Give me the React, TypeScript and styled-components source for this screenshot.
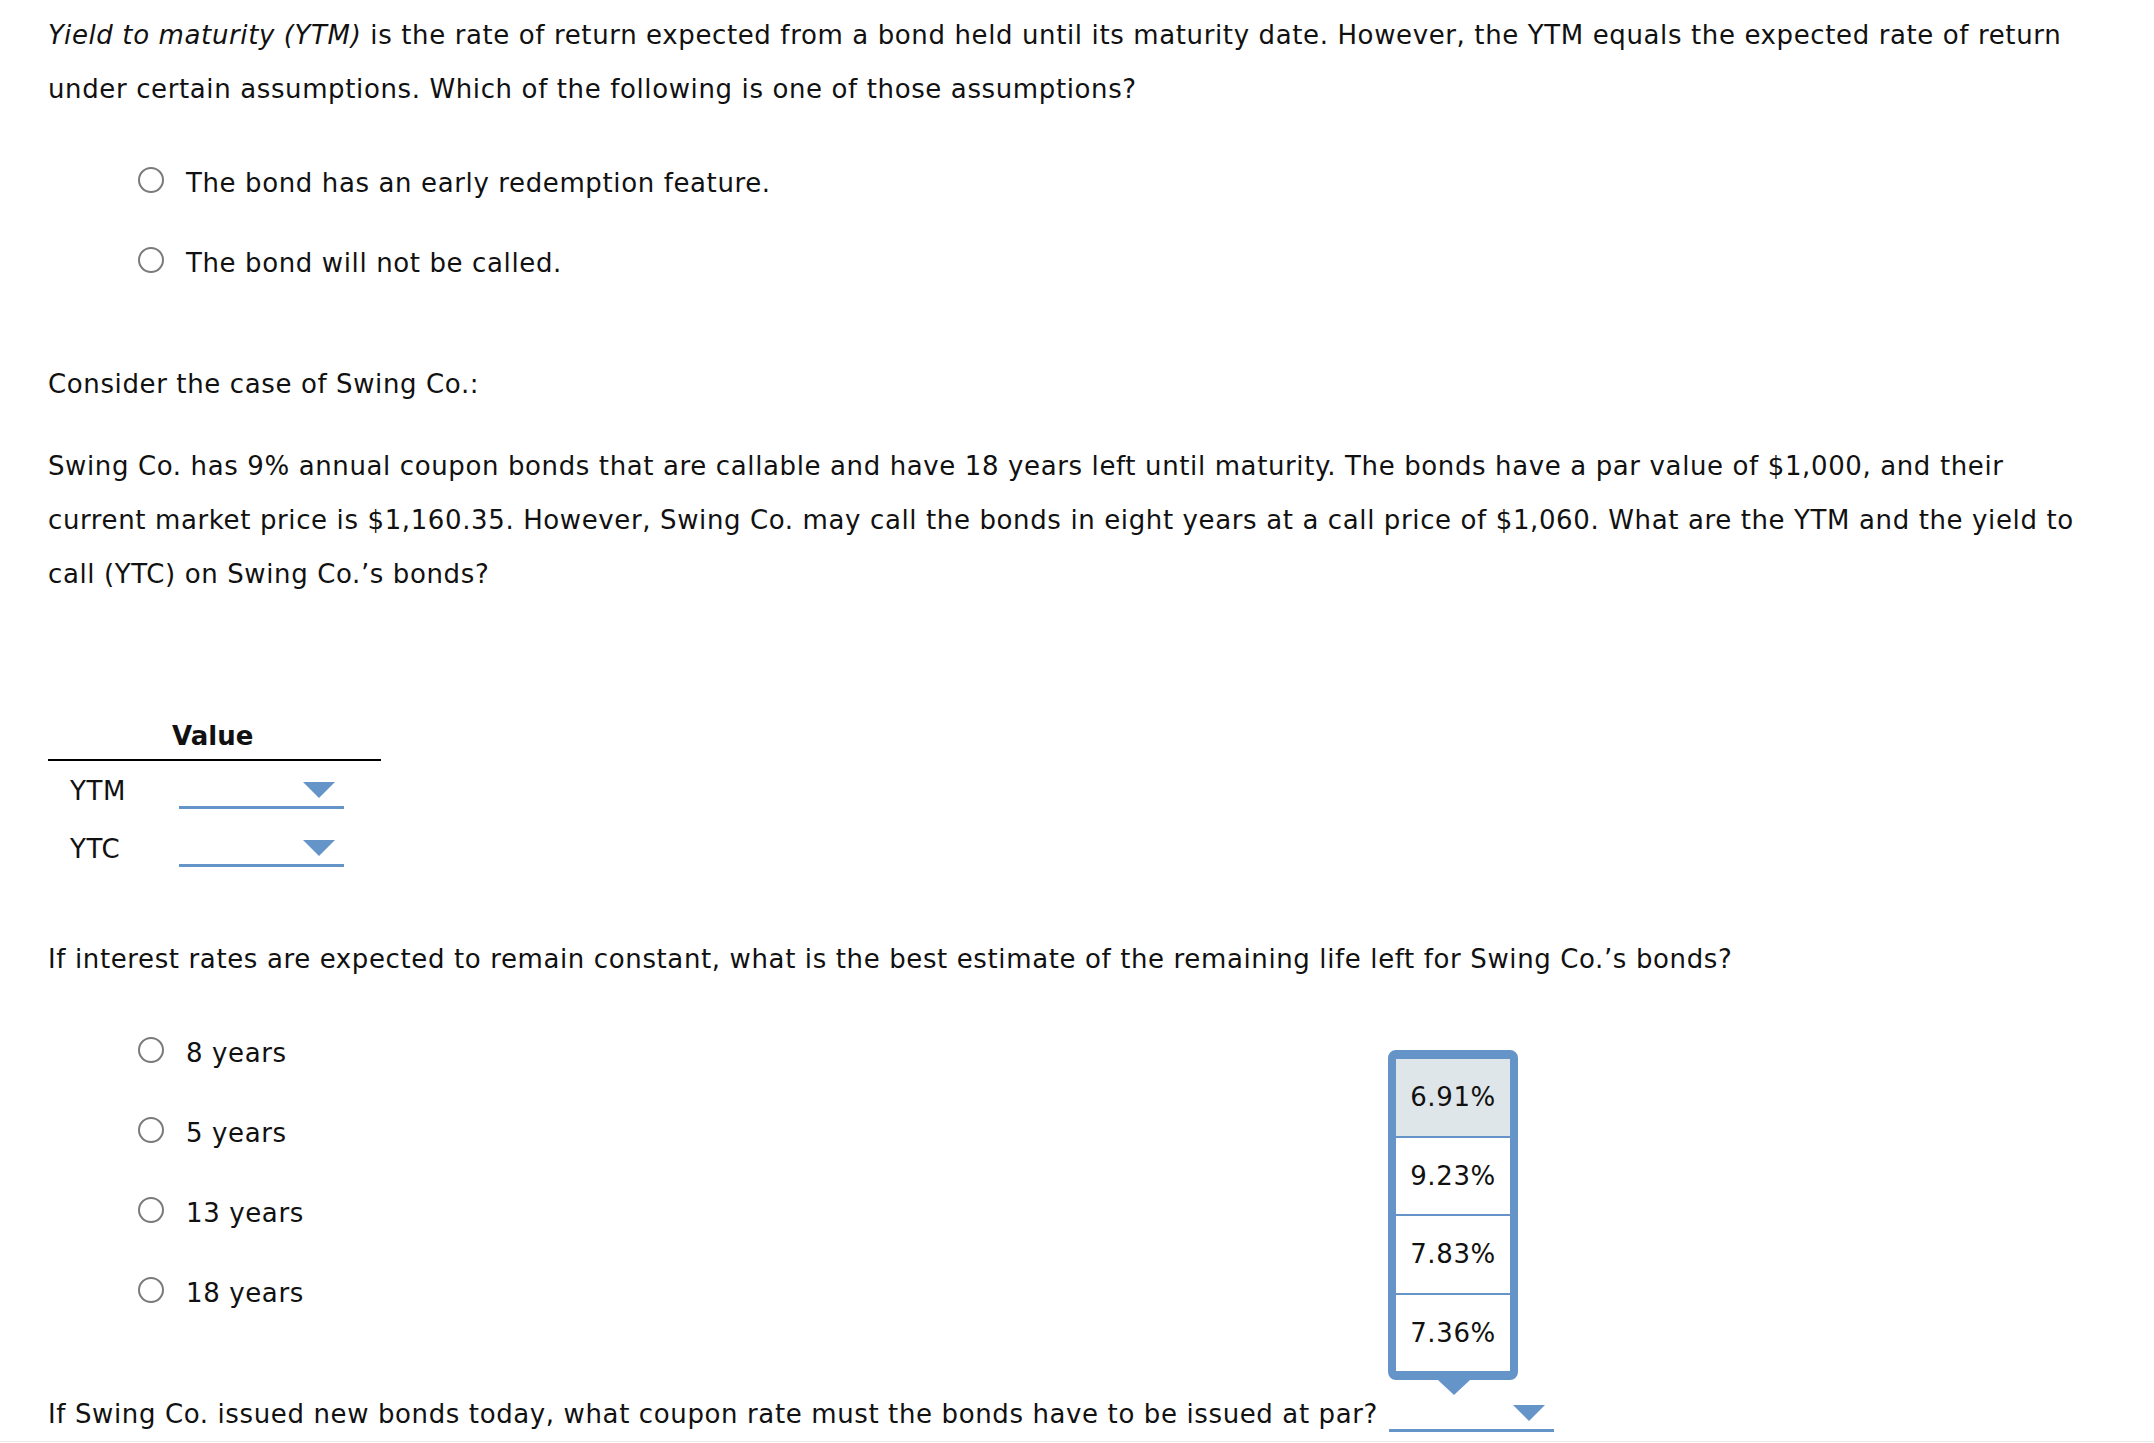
import React from "react";
import styled, { createGlobalStyle } from "styled-components";

const Global = createGlobalStyle`
  html, body { margin: 0; padding: 0; background: #fff; }
  body { font-family: "DejaVu Sans", Verdana, sans-serif; color: #111; }
`;

const BLUE = "#6594c8";

const Page = styled.div`
  padding: 8px 0 0 48px;
  width: 2154px;
  box-sizing: border-box;
  border-bottom: 1px solid #ececec;
  font-size: 26px;
  line-height: 54px;
  letter-spacing: 0.62px;
  display: flex;
  flex-direction: column;
`;

const Para = styled.p<{ $top?: number }>`
  margin: ${(p) => p.$top ?? 0}px 0 0 0;
  white-space: nowrap;
`;

const Options = styled.div<{ $top: number }>`
  margin-top: ${(p) => p.$top}px;
  display: flex;
  flex-direction: column;
  gap: 26px;
  padding-left: 90px;
`;

const Option = styled.label`
  display: flex;
  align-items: flex-start;
  gap: 22px;
`;

const Radio = styled.span`
  width: 26px;
  height: 26px;
  box-sizing: border-box;
  border: 2px solid #7a7a7a;
  border-radius: 50%;
  margin-top: 11px;
  flex: none;
`;

const Table = styled.div`
  margin-top: 120px;
  width: 333px;
  display: grid;
  grid-template-columns: 131px 165px;
  line-height: 30px;
`;

const HeadCell = styled.div`
  grid-column: 1 / span 2;
  padding: 0 0 8px 124px;
  font-weight: bold;
  letter-spacing: 0;
  border-bottom: 2px solid #000;
  width: 333px;
  box-sizing: border-box;
`;

const RowLabel = styled.div`
  padding: 15px 0 0 22px;
  height: 58px;
  box-sizing: border-box;
`;

const RowValue = styled.div`
  padding-top: 15px;
  height: 58px;
  box-sizing: border-box;
`;

const Select = styled.span<{ $inline?: boolean }>`
  position: relative;
  display: ${(p) => (p.$inline ? "inline-flex" : "flex")};
  justify-content: flex-end;
  align-items: flex-end;
  width: 165px;
  height: ${(p) => (p.$inline ? "27px" : "33px")};
  box-sizing: border-box;
  border-bottom: 3px solid ${BLUE};
  vertical-align: top;
  margin: ${(p) => (p.$inline ? "18px 0 0 11px" : "0")};
`;

const Caret = styled.span`
  width: 0;
  height: 0;
  border-left: 16px solid transparent;
  border-right: 16px solid transparent;
  border-top: 16px solid ${BLUE};
  margin: 0 9px 8px 0;
`;

const Popup = styled.div`
  position: absolute;
  left: -1px;
  bottom: calc(100% + 25px);
  width: 130px;
  height: 330px;
  box-sizing: border-box;
  border: 9px solid ${BLUE};
  border-left-width: 8px;
  border-right-width: 8px;
  border-radius: 8px;
  background: #fff;
  display: flex;
  flex-direction: column;
`;

const Pointer = styled.span`
  position: absolute;
  top: calc(100% + 9px);
  left: 42px;
  width: 0;
  height: 0;
  border-left: 16px solid transparent;
  border-right: 16px solid transparent;
  border-top: 15px solid ${BLUE};
`;

const Item = styled.div<{ $active?: boolean }>`
  flex: 1;
  display: flex;
  align-items: center;
  justify-content: center;
  background: ${(p) => (p.$active ? "#dfe6e9" : "#fff")};
  & + & { border-top: 2px solid ${BLUE}; }
  line-height: 30px;
`;

const SelectBox = ({ inline, children }: { inline?: boolean; children?: React.ReactNode }) => (
  <Select $inline={inline}>
    {children}
    <Caret />
  </Select>
);

export default function App() {
  return (
    <>
      <Global />
      <Page>
        <Para>
          <i>Yield to maturity (YTM)</i> is the rate of return expected from a bond held until its maturity date. However, the YTM equals the expected rate of return
          <br />
          under certain assumptions. Which of the following is one of those assumptions?
        </Para>
        <Options $top={40}>
          <Option><Radio />The bond has an early redemption feature.</Option>
          <Option><Radio />The bond will not be called.</Option>
        </Options>
        <Para $top={67}>Consider the case of Swing Co.:</Para>
        <Para $top={28}>
          Swing Co. has 9% annual coupon bonds that are callable and have 18 years left until maturity. The bonds have a par value of $1,000, and their
          <br />
          current market price is $1,160.35. However, Swing Co. may call the bonds in eight years at a call price of $1,060. What are the YTM and the yield to
          <br />
          call (YTC) on Swing Co.’s bonds?
        </Para>
        <Table>
          <HeadCell>Value</HeadCell>
          <RowLabel>YTM</RowLabel>
          <RowValue><SelectBox /></RowValue>
          <RowLabel>YTC</RowLabel>
          <RowValue><SelectBox /></RowValue>
        </Table>
        <Para $top={55}>
          If interest rates are expected to remain constant, what is the best estimate of the remaining life left for Swing Co.’s bonds?
        </Para>
        <Options $top={40}>
          <Option><Radio />8 years</Option>
          <Option><Radio />5 years</Option>
          <Option><Radio />13 years</Option>
          <Option><Radio />18 years</Option>
        </Options>
        <Para $top={67}>
          If Swing Co. issued new bonds today, what coupon rate must the bonds have to be issued at par?
          <SelectBox inline>
            <Popup>
              <Item $active>6.91%</Item>
              <Item>9.23%</Item>
              <Item>7.83%</Item>
              <Item>7.36%</Item>
              <Pointer />
            </Popup>
          </SelectBox>
        </Para>
      </Page>
    </>
  );
}
